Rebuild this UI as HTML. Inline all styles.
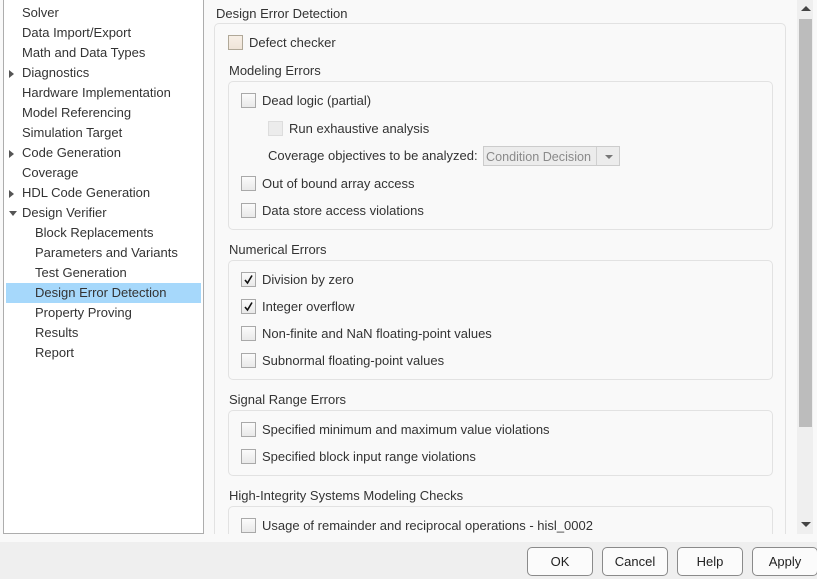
<!DOCTYPE html>
<html><head><style>
*{box-sizing:border-box;margin:0;padding:0}
body{width:817px;height:579px;overflow:hidden;background:#f9f9f9;font-family:"Liberation Sans",Arial,sans-serif;font-size:13px;color:#333;position:relative}
.abs{position:absolute;white-space:nowrap}
#tree{position:absolute;left:3px;top:-1px;width:201px;height:535px;background:#fff;border:1px solid #adadad}
.ti{position:absolute;left:18px;height:20px;line-height:20px}
.ti.s{left:31px}
.arr{position:absolute;left:7px;top:7px;width:0;height:0;border-left:5px solid #555;border-top:4px solid transparent;border-bottom:4px solid transparent}
.arr.d{left:5px;top:8px;border-top:5px solid #555;border-left:4px solid transparent;border-right:4px solid transparent;border-bottom:0}
.hl{position:absolute;left:2px;top:283px;width:195px;height:20px;background:#a6d8fb}
.box{position:absolute;border:1px solid #e2e2e2;border-radius:5px}
.cb{position:absolute;width:15px;height:15px;border:1px solid #a9a9a9;background:linear-gradient(#fbfbfb,#e9e9e9)}
.lbl{position:absolute;white-space:nowrap;line-height:16px;margin-top:1px}
.btn{position:absolute;top:547px;height:29px;width:66px;border:1px solid #8a8a8a;border-radius:5px;background:#fbfbfb;text-align:center;line-height:27px;color:#222}
</style></head><body>
<div id="tree">
<div class="hl"></div>
<div class="ti" style="top:3px">Solver</div>
<div class="ti" style="top:23px">Data Import/Export</div>
<div class="ti" style="top:43px">Math and Data Types</div>
<div class="ti" style="top:63px;left:0;padding-left:18px"><span class="arr" style="left:5px"></span>Diagnostics</div>
<div class="ti" style="top:83px">Hardware Implementation</div>
<div class="ti" style="top:103px">Model Referencing</div>
<div class="ti" style="top:123px">Simulation Target</div>
<div class="ti" style="top:143px;left:0;padding-left:18px"><span class="arr" style="left:5px"></span>Code Generation</div>
<div class="ti" style="top:163px">Coverage</div>
<div class="ti" style="top:183px;left:0;padding-left:18px"><span class="arr" style="left:5px"></span>HDL Code Generation</div>
<div class="ti" style="top:203px;left:0;padding-left:18px"><span class="arr d"></span>Design Verifier</div>
<div class="ti s" style="top:223px">Block Replacements</div>
<div class="ti s" style="top:243px">Parameters and Variants</div>
<div class="ti s" style="top:263px">Test Generation</div>
<div class="ti s" style="top:283px">Design Error Detection</div>
<div class="ti s" style="top:303px">Property Proving</div>
<div class="ti s" style="top:323px">Results</div>
<div class="ti s" style="top:343px">Report</div>
</div>

<div class="lbl" style="left:216px;top:5px">Design Error Detection</div>
<div class="box" style="left:214px;top:23px;width:572px;height:530px;border-bottom:none"></div>
<div class="cb" style="left:228px;top:35px;border-color:#b0a898;background:linear-gradient(#f7efe6,#efe4d8)"></div>
<div class="lbl" style="left:249px;top:34px">Defect checker</div>

<div class="lbl" style="left:229px;top:62px">Modeling Errors</div>
<div class="box" style="left:228px;top:81px;width:545px;height:149px"></div>
<div class="cb" style="left:241px;top:93px"></div><div class="lbl" style="left:262px;top:92px">Dead logic (partial)</div>
<div class="cb" style="left:268px;top:121px;border-color:#ddd;background:#ececec"></div><div class="lbl" style="left:289px;top:120px">Run exhaustive analysis</div>
<div class="lbl" style="left:268px;top:147px">Coverage objectives to be analyzed:</div>
<div style="position:absolute;left:483px;top:146px;width:137px;height:20px;border:1px solid #ccc;background:#ececec"><span class="abs" style="left:2px;top:2px;color:#8a8a8a;line-height:16px;font-size:12.6px">Condition Decision</span><span style="position:absolute;left:112px;top:0;width:1px;height:18px;background:#d0d0d0"></span><span style="position:absolute;left:121px;top:8px;border-top:4px solid #777;border-left:4px solid transparent;border-right:4px solid transparent"></span></div>
<div class="cb" style="left:241px;top:176px"></div><div class="lbl" style="left:262px;top:175px">Out of bound array access</div>
<div class="cb" style="left:241px;top:203px"></div><div class="lbl" style="left:262px;top:202px">Data store access violations</div>

<div class="lbl" style="left:229px;top:241px">Numerical Errors</div>
<div class="box" style="left:228px;top:260px;width:545px;height:120px"></div>
<div class="cb" style="left:241px;top:272px"><svg width="13" height="13" style="position:absolute;left:0;top:0"><path d="M3 7 L5.5 10 L10 2.5" fill="none" stroke="#111" stroke-width="1.6"/></svg></div><div class="lbl" style="left:262px;top:271px">Division by zero</div>
<div class="cb" style="left:241px;top:299px"><svg width="13" height="13" style="position:absolute;left:0;top:0"><path d="M3 7 L5.5 10 L10 2.5" fill="none" stroke="#111" stroke-width="1.6"/></svg></div><div class="lbl" style="left:262px;top:298px">Integer overflow</div>
<div class="cb" style="left:241px;top:326px"></div><div class="lbl" style="left:262px;top:325px">Non-finite and NaN floating-point values</div>
<div class="cb" style="left:241px;top:353px"></div><div class="lbl" style="left:262px;top:352px">Subnormal floating-point values</div>

<div class="lbl" style="left:229px;top:391px">Signal Range Errors</div>
<div class="box" style="left:228px;top:410px;width:545px;height:66px"></div>
<div class="cb" style="left:241px;top:422px"></div><div class="lbl" style="left:262px;top:421px">Specified minimum and maximum value violations</div>
<div class="cb" style="left:241px;top:449px"></div><div class="lbl" style="left:262px;top:448px">Specified block input range violations</div>

<div class="lbl" style="left:229px;top:487px">High-Integrity Systems Modeling Checks</div>
<div class="box" style="left:228px;top:506px;width:545px;height:60px;border-bottom:none"></div>
<div class="cb" style="left:241px;top:518px"></div><div class="lbl" style="left:262px;top:517px">Usage of remainder and reciprocal operations - hisl_0002</div>

<div style="position:absolute;left:0;top:534px;width:817px;height:8px;background:#f9f9f9"></div>
<div style="position:absolute;left:797px;top:0;width:16px;height:534px;background:#efefef"></div>
<div style="position:absolute;left:799px;top:19px;width:13px;height:408px;background:#bcbcbc"></div>
<div style="position:absolute;left:801px;top:6px;border-bottom:5px solid #444;border-left:5px solid transparent;border-right:5px solid transparent"></div>
<div style="position:absolute;left:801px;top:522px;border-top:5px solid #444;border-left:5px solid transparent;border-right:5px solid transparent"></div>

<div style="position:absolute;left:0;top:542px;width:817px;height:37px;background:#efefef"></div>
<div class="btn" style="left:527px">OK</div>
<div class="btn" style="left:602px">Cancel</div>
<div class="btn" style="left:677px">Help</div>
<div class="btn" style="left:752px">Apply</div>
</body></html>
